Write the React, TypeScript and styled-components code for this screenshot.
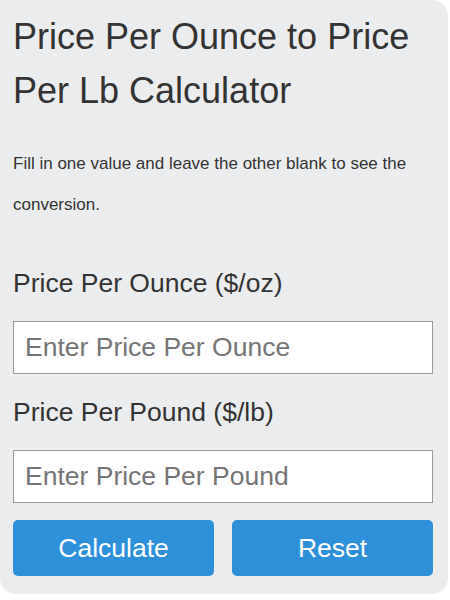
import React from "react";
import styled, { createGlobalStyle } from "styled-components";

const Global = createGlobalStyle`
  html, body { margin: 0; padding: 0; background: #ffffff; }
  body { font-family: "Liberation Sans", Arial, sans-serif; }
  * { box-sizing: border-box; }
`;

const Card = styled.div`
  width: 448px;
  background: #ebeced;
  border-radius: 0 16px 16px 16px;
  padding: 10px 15px 18px 13px;
  display: flex;
  flex-direction: column;
  color: #333333;
`;

const Title = styled.h1`
  margin: 0 0 25px;
  font-size: 36px;
  font-weight: 400;
  line-height: 54px;
  color: #333333;
`;

const Intro = styled.p`
  margin: 0;
  font-size: 17px;
  line-height: 41px;
  color: #333333;
`;

const Label = styled.label<{ $top: number }>`
  display: block;
  margin-top: ${(p) => p.$top}px;
  font-size: 26.5px;
  line-height: 30px;
  color: #333333;
`;

const Input = styled.input`
  display: block;
  width: 100%;
  height: 53px;
  margin-top: 23px;
  padding: 0 11px;
  border: 1px solid #999999;
  border-radius: 0;
  background: #ffffff;
  font-family: "Liberation Sans", Arial, sans-serif;
  font-size: 26.5px;
  color: #333333;
  outline: none;
  &::placeholder { color: #757575; }
`;

const ButtonRow = styled.div`
  display: grid;
  grid-template-columns: 1fr 1fr;
  gap: 18px;
  margin-top: 17px;
`;

const Button = styled.button`
  height: 56px;
  border: none;
  border-radius: 5px;
  background: #2d90d9;
  color: #ffffff;
  font-family: "Liberation Sans", Arial, sans-serif;
  font-size: 26.5px;
  cursor: pointer;
`;

export default function App() {
  return (
    <>
      <Global />
      <Card>
        <Title>Price Per Ounce to Price Per Lb Calculator</Title>
        <Intro>Fill in one value and leave the other blank to see the conversion.</Intro>
        <Label $top={43} htmlFor="oz">Price Per Ounce ($/oz)</Label>
        <Input id="oz" placeholder="Enter Price Per Ounce" />
        <Label $top={23} htmlFor="lb">Price Per Pound ($/lb)</Label>
        <Input id="lb" placeholder="Enter Price Per Pound" />
        <ButtonRow>
          <Button>Calculate</Button>
          <Button>Reset</Button>
        </ButtonRow>
      </Card>
    </>
  );
}
